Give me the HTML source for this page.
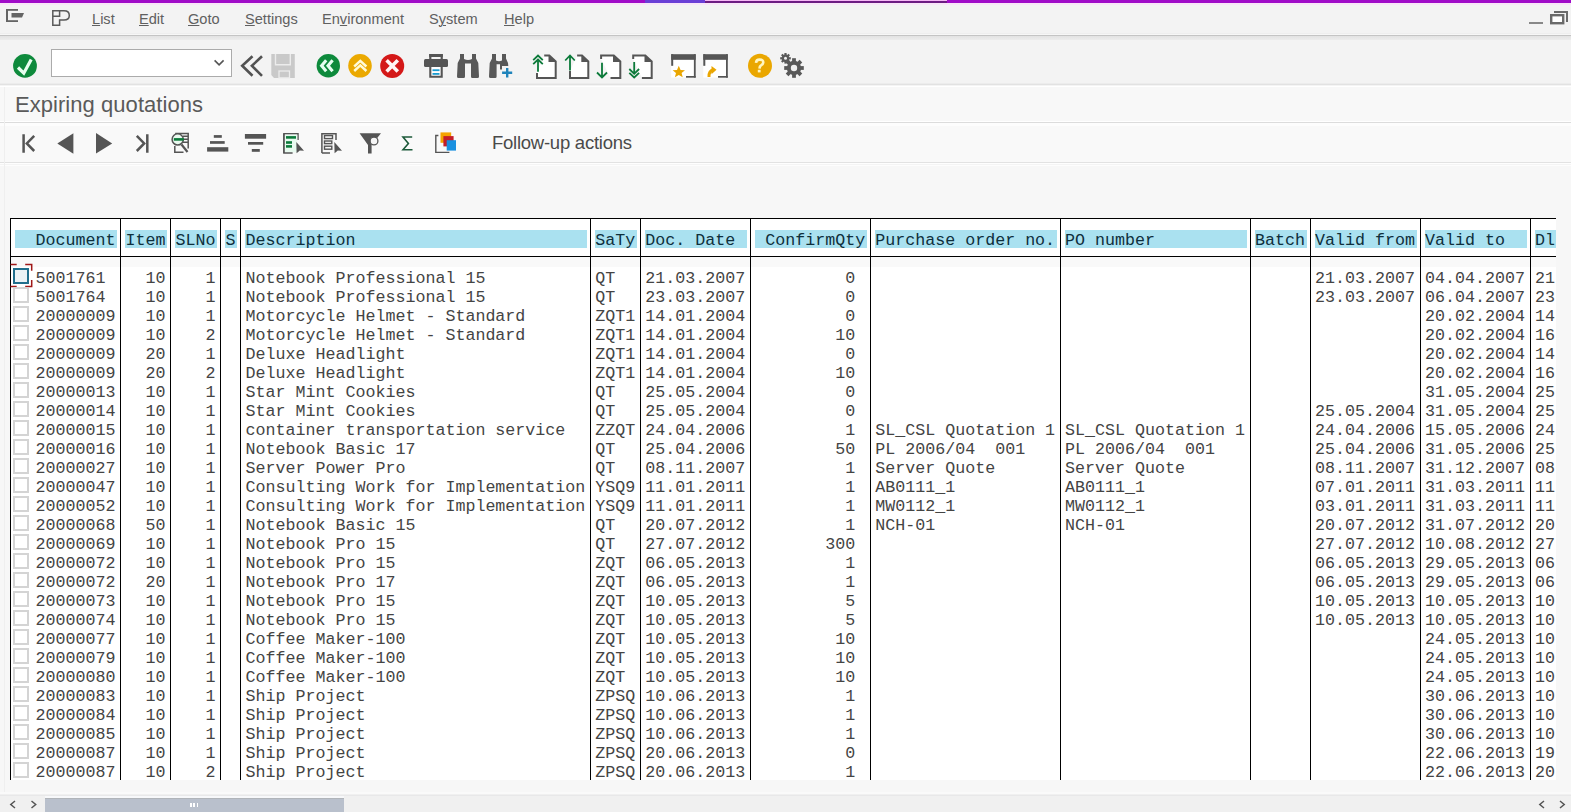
<!DOCTYPE html>
<html><head><meta charset="utf-8"><style>
*{box-sizing:border-box}
html,body{margin:0;padding:0}
body{width:1571px;height:812px;overflow:hidden;position:relative;background:#f7f7f7;font-family:"Liberation Sans",sans-serif}
.a{position:absolute}
.mono{font-family:"Liberation Mono",monospace;font-size:16.6667px;white-space:pre;line-height:19px}
.menu{position:absolute;top:2px;font-size:14.6px;color:#606060;line-height:35px;white-space:pre}
.menu u{text-decoration:underline;text-underline-offset:1px;text-decoration-thickness:1px}
</style></head><body>

<div class="a" style="left:0;top:0;width:1571px;height:3px;background:#a00cc8"></div>
<div class="a" style="left:645px;top:0;width:60px;height:3px;background:#6a3fd6"></div>
<div class="a" style="left:705px;top:0;width:242px;height:1px;background:#f5b8f5"></div>
<div class="a" style="left:705px;top:1px;width:242px;height:2px;background:#6c1c82"></div>
<div class="a" style="left:0;top:3px;width:1571px;height:81px;background:#f3f3f3"></div>
<div class="a" style="left:0;top:3px;width:1571px;height:2px;background:#f8e6f8"></div>
<div class="a" style="left:0;top:33px;width:1571px;height:1px;background:#eeeeee"></div>
<div class="a" style="left:0;top:34px;width:1571px;height:1px;background:#f7f7f7"></div>
<div class="a" style="left:0;top:35px;width:1571px;height:1px;background:#c4c4c4"></div>
<div class="a" style="left:0;top:36px;width:1571px;height:4px;background:linear-gradient(#e2e2e2,#ececec)"></div>
<div class="a" style="left:0;top:83px;width:1571px;height:1px;background:#ececec"></div>
<div class="a" style="left:0;top:84px;width:1571px;height:1px;background:#e2e2e2"></div>
<div class="a" style="left:0;top:85px;width:1571px;height:1px;background:#f4f4f4"></div>
<div class="a" style="left:0;top:86px;width:1571px;height:1px;background:#ffffff"></div>
<div class="a" style="left:0;top:87px;width:1571px;height:35px;background:#f8f8f8"></div>
<div class="a" style="left:0;top:121px;width:1571px;height:1px;background:#ffffff"></div>
<div class="a" style="left:0;top:122px;width:1571px;height:1px;background:#dcdcdc"></div>
<div class="a" style="left:0;top:123px;width:1571px;height:3px;background:#fdfdfd"></div>
<div class="a" style="left:0;top:126px;width:1571px;height:36px;background:#f9f9f9"></div>
<div class="a" style="left:0;top:162px;width:1571px;height:1px;background:#e2e2e2"></div>
<div class="a" style="left:0;top:163px;width:1571px;height:1px;background:#fefefe"></div>
<div class="a" style="left:0;top:164px;width:1571px;height:1px;background:#f4f4f4"></div>
<div class="a" style="left:0;top:165px;width:1571px;height:1px;background:#fdfdfd"></div>
<div class="a" style="left:4px;top:87px;width:1px;height:706px;background:#efefef"></div>
<div class="menu" style="left:92px"><u>L</u>ist</div>
<div class="menu" style="left:139px"><u>E</u>dit</div>
<div class="menu" style="left:188px"><u>G</u>oto</div>
<div class="menu" style="left:245px"><u>S</u>ettings</div>
<div class="menu" style="left:322px">En<u>v</u>ironment</div>
<div class="menu" style="left:429px">S<u>y</u>stem</div>
<div class="menu" style="left:504px"><u>H</u>elp</div>
<div class="a" style="left:15px;top:90px;font-size:22px;color:#5a5a5a;line-height:30px;letter-spacing:0.05px;white-space:pre">Expiring quotations</div>
<div class="a" style="left:492px;top:130px;font-size:18.5px;color:#4a4a4a;line-height:26px;letter-spacing:-0.25px;white-space:pre">Follow-up actions</div>
<div class="a" style="left:51px;top:49px;width:181px;height:28px;background:#fff;border:1px solid #ababab"></div>
<div class="a" style="left:10px;top:218px;width:1546px;height:562px;background:#fff;overflow:hidden">
<div class="a" style="left:5px;top:12px;width:102px;height:18px;background:#aae1f0"></div>
<div class="a" style="left:115px;top:12px;width:42px;height:18px;background:#aae1f0"></div>
<div class="a" style="left:165px;top:12px;width:42px;height:18px;background:#aae1f0"></div>
<div class="a" style="left:215px;top:12px;width:12px;height:18px;background:#aae1f0"></div>
<div class="a" style="left:235px;top:12px;width:342px;height:18px;background:#aae1f0"></div>
<div class="a" style="left:585px;top:12px;width:42px;height:18px;background:#aae1f0"></div>
<div class="a" style="left:635px;top:12px;width:102px;height:18px;background:#aae1f0"></div>
<div class="a" style="left:745px;top:12px;width:112px;height:18px;background:#aae1f0"></div>
<div class="a" style="left:865px;top:12px;width:182px;height:18px;background:#aae1f0"></div>
<div class="a" style="left:1055px;top:12px;width:182px;height:18px;background:#aae1f0"></div>
<div class="a" style="left:1245px;top:12px;width:52px;height:18px;background:#aae1f0"></div>
<div class="a" style="left:1305px;top:12px;width:102px;height:18px;background:#aae1f0"></div>
<div class="a" style="left:1415px;top:12px;width:102px;height:18px;background:#aae1f0"></div>
<div class="a" style="left:1525px;top:12px;width:42px;height:18px;background:#aae1f0"></div>
<div class="a mono" style="left:5.6px;top:13px;color:#0e2f3c">  Document Item SLNo S Description                        SaTy Doc. Date   ConfirmQty Purchase order no. PO number          Batch Valid from Valid to   Dl  </div>
<div class="a" style="left:0;top:0;width:1546px;height:1px;background:#000"></div>
<div class="a" style="left:0;top:38px;width:1546px;height:1px;background:#000"></div>
<div class="a" style="left:0;top:39px;width:1546px;height:10px;background:#f9f9f9"></div>
<div class="a" style="left:0px;top:0;width:1px;height:562px;background:#000"></div>
<div class="a" style="left:110px;top:0;width:1px;height:562px;background:#000"></div>
<div class="a" style="left:160px;top:0;width:1px;height:562px;background:#000"></div>
<div class="a" style="left:210px;top:0;width:1px;height:562px;background:#000"></div>
<div class="a" style="left:230px;top:0;width:1px;height:562px;background:#000"></div>
<div class="a" style="left:580px;top:0;width:1px;height:562px;background:#000"></div>
<div class="a" style="left:630px;top:0;width:1px;height:562px;background:#000"></div>
<div class="a" style="left:740px;top:0;width:1px;height:562px;background:#000"></div>
<div class="a" style="left:860px;top:0;width:1px;height:562px;background:#000"></div>
<div class="a" style="left:1050px;top:0;width:1px;height:562px;background:#000"></div>
<div class="a" style="left:1240px;top:0;width:1px;height:562px;background:#000"></div>
<div class="a" style="left:1300px;top:0;width:1px;height:562px;background:#000"></div>
<div class="a" style="left:1410px;top:0;width:1px;height:562px;background:#000"></div>
<div class="a" style="left:1520px;top:0;width:1px;height:562px;background:#000"></div>
<div class="a mono" style="left:5.6px;top:51px;color:#444">  5001761    10    1   Notebook Professional 15           QT   21.03.2007          0                                              21.03.2007 04.04.2007 21  
  5001764    10    1   Notebook Professional 15           QT   23.03.2007          0                                              23.03.2007 06.04.2007 23  
  20000009   10    1   Motorcycle Helmet - Standard       ZQT1 14.01.2004          0                                                         20.02.2004 14  
  20000009   10    2   Motorcycle Helmet - Standard       ZQT1 14.01.2004         10                                                         20.02.2004 16  
  20000009   20    1   Deluxe Headlight                   ZQT1 14.01.2004          0                                                         20.02.2004 14  
  20000009   20    2   Deluxe Headlight                   ZQT1 14.01.2004         10                                                         20.02.2004 16  
  20000013   10    1   Star Mint Cookies                  QT   25.05.2004          0                                                         31.05.2004 25  
  20000014   10    1   Star Mint Cookies                  QT   25.05.2004          0                                              25.05.2004 31.05.2004 25  
  20000015   10    1   container transportation service   ZZQT 24.04.2006          1  SL_CSL Quotation 1 SL_CSL Quotation 1       24.04.2006 15.05.2006 24  
  20000016   10    1   Notebook Basic 17                  QT   25.04.2006         50  PL 2006/04  001    PL 2006/04  001          25.04.2006 31.05.2006 25  
  20000027   10    1   Server Power Pro                   QT   08.11.2007          1  Server Quote       Server Quote             08.11.2007 31.12.2007 08  
  20000047   10    1   Consulting Work for Implementation YSQ9 11.01.2011          1  AB0111_1           AB0111_1                 07.01.2011 31.03.2011 11  
  20000052   10    1   Consulting Work for Implementation YSQ9 11.01.2011          1  MW0112_1           MW0112_1                 03.01.2011 31.03.2011 11  
  20000068   50    1   Notebook Basic 15                  QT   20.07.2012          1  NCH-01             NCH-01                   20.07.2012 31.07.2012 20  
  20000069   10    1   Notebook Pro 15                    QT   27.07.2012        300                                              27.07.2012 10.08.2012 27  
  20000072   10    1   Notebook Pro 15                    ZQT  06.05.2013          1                                              06.05.2013 29.05.2013 06  
  20000072   20    1   Notebook Pro 17                    ZQT  06.05.2013          1                                              06.05.2013 29.05.2013 06  
  20000073   10    1   Notebook Pro 15                    ZQT  10.05.2013          5                                              10.05.2013 10.05.2013 10  
  20000074   10    1   Notebook Pro 15                    ZQT  10.05.2013          5                                              10.05.2013 10.05.2013 10  
  20000077   10    1   Coffee Maker-100                   ZQT  10.05.2013         10                                                         24.05.2013 10  
  20000079   10    1   Coffee Maker-100                   ZQT  10.05.2013         10                                                         24.05.2013 10  
  20000080   10    1   Coffee Maker-100                   ZQT  10.05.2013         10                                                         24.05.2013 10  
  20000083   10    1   Ship Project                       ZPSQ 10.06.2013          1                                                         30.06.2013 10  
  20000084   10    1   Ship Project                       ZPSQ 10.06.2013          1                                                         30.06.2013 10  
  20000085   10    1   Ship Project                       ZPSQ 10.06.2013          1                                                         30.06.2013 10  
  20000087   10    1   Ship Project                       ZPSQ 20.06.2013          0                                                         22.06.2013 19  
  20000087   10    2   Ship Project                       ZPSQ 20.06.2013          1                                                         22.06.2013 20  </div>
<svg class="a" style="left:0;top:45px" width="24" height="25" viewBox="10 263 24 25"><g fill="none" stroke="#a01818" stroke-width="1.5"><path d="M10.5 264.4 H16.7 M25.2 264.4 H31.7 V270.7 M31.7 280.1 V286.4 H25.2 M16.7 286.4 H10.5"/></g></svg>
<div class="a" style="left:3px;top:50px;width:16px;height:16px;border:2px solid #1f6e8c;background:#eaf2f5"></div>
<div class="a" style="left:3px;top:69px;width:16px;height:16px;border:2px solid #d4d4d4;background:#fff"></div>
<div class="a" style="left:3px;top:88px;width:16px;height:16px;border:2px solid #d4d4d4;background:#fff"></div>
<div class="a" style="left:3px;top:107px;width:16px;height:16px;border:2px solid #d4d4d4;background:#fff"></div>
<div class="a" style="left:3px;top:126px;width:16px;height:16px;border:2px solid #d4d4d4;background:#fff"></div>
<div class="a" style="left:3px;top:145px;width:16px;height:16px;border:2px solid #d4d4d4;background:#fff"></div>
<div class="a" style="left:3px;top:164px;width:16px;height:16px;border:2px solid #d4d4d4;background:#fff"></div>
<div class="a" style="left:3px;top:183px;width:16px;height:16px;border:2px solid #d4d4d4;background:#fff"></div>
<div class="a" style="left:3px;top:202px;width:16px;height:16px;border:2px solid #d4d4d4;background:#fff"></div>
<div class="a" style="left:3px;top:221px;width:16px;height:16px;border:2px solid #d4d4d4;background:#fff"></div>
<div class="a" style="left:3px;top:240px;width:16px;height:16px;border:2px solid #d4d4d4;background:#fff"></div>
<div class="a" style="left:3px;top:259px;width:16px;height:16px;border:2px solid #d4d4d4;background:#fff"></div>
<div class="a" style="left:3px;top:278px;width:16px;height:16px;border:2px solid #d4d4d4;background:#fff"></div>
<div class="a" style="left:3px;top:297px;width:16px;height:16px;border:2px solid #d4d4d4;background:#fff"></div>
<div class="a" style="left:3px;top:316px;width:16px;height:16px;border:2px solid #d4d4d4;background:#fff"></div>
<div class="a" style="left:3px;top:335px;width:16px;height:16px;border:2px solid #d4d4d4;background:#fff"></div>
<div class="a" style="left:3px;top:354px;width:16px;height:16px;border:2px solid #d4d4d4;background:#fff"></div>
<div class="a" style="left:3px;top:373px;width:16px;height:16px;border:2px solid #d4d4d4;background:#fff"></div>
<div class="a" style="left:3px;top:392px;width:16px;height:16px;border:2px solid #d4d4d4;background:#fff"></div>
<div class="a" style="left:3px;top:411px;width:16px;height:16px;border:2px solid #d4d4d4;background:#fff"></div>
<div class="a" style="left:3px;top:430px;width:16px;height:16px;border:2px solid #d4d4d4;background:#fff"></div>
<div class="a" style="left:3px;top:449px;width:16px;height:16px;border:2px solid #d4d4d4;background:#fff"></div>
<div class="a" style="left:3px;top:468px;width:16px;height:16px;border:2px solid #d4d4d4;background:#fff"></div>
<div class="a" style="left:3px;top:487px;width:16px;height:16px;border:2px solid #d4d4d4;background:#fff"></div>
<div class="a" style="left:3px;top:506px;width:16px;height:16px;border:2px solid #d4d4d4;background:#fff"></div>
<div class="a" style="left:3px;top:525px;width:16px;height:16px;border:2px solid #d4d4d4;background:#fff"></div>
<div class="a" style="left:3px;top:544px;width:16px;height:16px;border:2px solid #d4d4d4;background:#fff"></div>
</div>
<svg class="a" style="left:0;top:0" width="1571" height="170" viewBox="0 0 1571 170">
<!-- menu icons -->
<g fill="#646464">
<rect x="6" y="9" width="12" height="1.8"/><rect x="6" y="9" width="2" height="13"/><rect x="6" y="20.2" width="12" height="1.8"/>
<path d="M11.5 13 H24 L22 17.5 H11.5 Z"/>
</g>
<g fill="none" stroke="#5a5a5a" stroke-width="1.5">
<path d="M52.8 10.8 H64 Q69.3 10.8 69.3 15.5 Q69.3 20 64 20 H59.6 V25.3 H52.8 Z"/>
<path d="M52.8 16.3 H59.6 V10.8"/>
</g>
<!-- window controls -->
<rect x="1529" y="22" width="14" height="2" fill="#888"/>
<rect x="1551.2" y="15.2" width="12" height="8" fill="#fff" stroke="#6a6a6a" stroke-width="2.4"/>
<path d="M1554 12 H1567 V22" fill="none" stroke="#6a6a6a" stroke-width="2"/>
<!-- check -->
<circle cx="25" cy="65.9" r="11.9" fill="#0e8a3c"/>
<path d="M18 67.5 L23.8 73.2 L31.2 59.5" fill="none" stroke="#e8fff0" stroke-width="3.2" stroke-linejoin="miter"/>
<!-- dropdown chevron -->
<path d="M214.6 60.4 L219.1 64.9 L223.6 60.4" fill="none" stroke="#555" stroke-width="1.6"/>
<!-- << -->
<path d="M252.5 56.3 L242.2 65.8 L252.5 75.8 M262 56.3 L251.9 65.8 L262 75.8" fill="none" stroke="#525252" stroke-width="2.6"/>
<!-- save disabled -->
<path d="M271.3 54 H294.8 V77.9 H274 L271.3 75 Z" fill="#c9c9c9"/>
<path d="M275.5 54 V64.8 H290.3 V54" fill="none" stroke="#ececec" stroke-width="1.4"/>
<rect x="279" y="71" width="10.5" height="6.9" fill="none" stroke="#ececec" stroke-width="1.3"/>
<!-- green back -->
<circle cx="328.3" cy="65.8" r="11.7" fill="#0d8a3c"/>
<path d="M326.2 60.3 L321.6 65.8 L326.2 71.3 M332.6 60.3 L328 65.8 L332.6 71.3" fill="none" stroke="#e6fff2" stroke-width="3.1"/>
<!-- orange up -->
<circle cx="360" cy="65.8" r="11.8" fill="#eba900"/>
<path d="M354.2 66.5 L360.3 60.8 L366.4 66.5 M354.2 71 L360.3 65.3 L366.4 71" fill="none" stroke="#fffbd8" stroke-width="2.4"/>
<!-- red cancel -->
<circle cx="392.2" cy="65.9" r="12" fill="#d41818"/>
<path d="M386.6 60.3 L397.8 71.5 M397.8 60.3 L386.6 71.5" fill="none" stroke="#fff4f4" stroke-width="3.6"/>
<!-- printer -->
<g fill="#555">
<rect x="429.2" y="54" width="13.6" height="3" rx="0.5"/>
<rect x="429.2" y="54" width="2.2" height="5"/><rect x="440.6" y="54" width="2.2" height="5"/>
<rect x="424" y="59" width="24" height="8" rx="1.5"/>
</g>
<path d="M430.3 67 V76.7 H441.7 V67" fill="#fff" stroke="#555" stroke-width="2.1"/>
<rect x="432.5" y="69.3" width="7" height="1.8" fill="#1a9bd0"/><rect x="432.5" y="73" width="7" height="1.8" fill="#1a9bd0"/>
<!-- binoculars -->
<path d="M460 54 H464 V59 Q468 61.2 472 59 V54 H476 V58.5 L478.3 63 L479 76.5 Q479 78 477.5 78 H472.3 Q471 78 471 76.5 V63.6 H465 V76.5 Q465 78 463.7 78 H458.5 Q457 78 457 76.5 L457.7 63 L460 58.5 Z" fill="#585858"/>
<path d="M492 54 H496 V60.5 Q499 62 502 60.5 V54 H506 V58.5 L508 63 L508.3 66 H503 V69.6 H500 V64.2 H496.6 V76.5 Q496.6 78 495.3 78 H490.5 Q489 78 489 76.5 L489.7 63 L492 58.5 Z" fill="#585858"/>
<path d="M502 66 H512.5 V78.5 H502 Z" fill="#f3f3f3"/>
<path d="M507.2 68.1 V77.6 M502.1 72.8 H512.2" stroke="#1f84bb" stroke-width="2.4" fill="none"/>
<!-- page icons -->
<g stroke="#555" stroke-width="2" fill="#fff">
<path d="M544.2 55.4 H549.3 L555.7 61.5 V77.9 H537 V73"/>
<path d="M577.1 55.4 H582 L588.3 61.5 V77.9 H570 V71"/>
<path d="M610.5 77.9 H620.3 V61.5 L613.8 55.4 H601.1 V59.1"/>
<path d="M641.9 77.9 H651.7 V61.5 L645.3 55.4 H633.2 V59.1"/>
</g>
<g fill="#555">
<path d="M548.5 55 L556 62 H548.5 Z"/><path d="M581.3 55 L588.8 62 H581.3 Z"/>
<path d="M613 55 L620.8 62 H613 Z"/><path d="M644.5 55 L652.2 62 H644.5 Z"/>
</g>
<g stroke="#0c7a3a" stroke-width="1.8" fill="none">
<path d="M538 71.8 V59.5 M533.2 60.2 L538 55.5 L542.8 60.2 M533.2 64.2 L538 59.5 L542.8 64.2"/>
<path d="M570 70.5 V56 M565.2 60.5 L570 55.5 L574.8 60.5"/>
<path d="M602 62.7 V77 M597 72.5 L602 77.5 L607 72.5"/>
<path d="M634.2 62 V73 M629.3 69 L634.2 73.8 L639.1 69 M629.3 72.8 L634.2 77.5 L639.1 72.8"/>
</g>
<!-- windows -->
<rect x="671.2" y="59.8" width="22.7" height="17.8" fill="#fff"/><rect x="703.3" y="59.8" width="22.7" height="17.8" fill="#fff"/>
<g fill="#555">
<rect x="671.2" y="54.2" width="24.5" height="5.6"/><rect x="671.2" y="54.2" width="2" height="11.6"/><rect x="693.9" y="54.2" width="1.8" height="23.4"/><rect x="686" y="76" width="9.7" height="1.7"/>
<rect x="703.3" y="54.2" width="24.5" height="5.6"/><rect x="703.3" y="54.2" width="2" height="11.6"/><rect x="726" y="54.2" width="1.8" height="23.4"/><rect x="718" y="76" width="9.8" height="1.7"/>
</g>
<path d="M678.8 65.8 L680.6 69.9 L685 70.2 L681.6 73 L682.7 77.3 L678.8 74.9 L674.9 77.3 L676 73 L672.6 70.2 L677 69.9 Z" fill="#eaa600"/>
<path d="M709 77 Q708.6 71.2 713 70" fill="none" stroke="#eaa600" stroke-width="3"/><path d="M711.5 66 L716.5 69.8 L711.5 74.2 Z" fill="#eaa600"/>
<!-- help -->
<circle cx="760" cy="65.8" r="12" fill="#eaa700"/>
<path d="M756 62.8 Q756.2 59.6 759.6 59.6 Q763.6 59.6 763.2 62.8 Q762.8 64.6 760.8 65.6 Q759.6 66.4 759.5 68.6" fill="none" stroke="#fff6c0" stroke-width="2.6"/>
<rect x="757.8" y="69.8" width="2.8" height="2.6" fill="#fff6c0"/>
<!-- gears -->
<g fill="#595959">
<g transform="translate(794 68)">
<circle r="7.2"/>
<rect x="-1.9" y="-9.8" width="3.8" height="19.6"/>
<rect x="-1.9" y="-9.8" width="3.8" height="19.6" transform="rotate(45)"/>
<rect x="-1.9" y="-9.8" width="3.8" height="19.6" transform="rotate(90)"/>
<rect x="-1.9" y="-9.8" width="3.8" height="19.6" transform="rotate(135)"/>
</g>
<g transform="translate(785.5 58.3)">
<circle r="3.8"/>
<rect x="-1.1" y="-5.3" width="2.2" height="10.6"/>
<rect x="-1.1" y="-5.3" width="2.2" height="10.6" transform="rotate(45)"/>
<rect x="-1.1" y="-5.3" width="2.2" height="10.6" transform="rotate(90)"/>
<rect x="-1.1" y="-5.3" width="2.2" height="10.6" transform="rotate(135)"/>
</g>
</g>
<circle cx="794" cy="68" r="3.2" fill="#f0f0f0"/>
<circle cx="785.5" cy="58.3" r="1.5" fill="#f0f0f0"/>
<!-- app toolbar -->
<g fill="none" stroke="#555" stroke-width="2.5">
<path d="M23.6 134.2 V152.7 M34.2 135.8 L26.8 143.5 L34.2 151"/>
<path d="M147.3 134.2 V152.7 M136.8 135.8 L144.2 143.5 L136.8 151"/>
</g>
<path d="M57.3 143.5 L73.4 133.2 V153.8 Z" fill="#555"/>
<path d="M112.2 143.4 L96 133.1 V153.6 Z" fill="#555"/>
<!-- magnifier doc -->
<g fill="none" stroke="#555" stroke-width="1.5">
<path d="M175.2 133.5 H188.2 V148.5 M183 136.2 H188.2 M183.5 139.2 H188.2 M183 142.3 H188.2 M174.8 146 V152.3 H183.5"/>
</g>
<circle cx="177.7" cy="139.4" r="5.6" fill="#eafaf0" stroke="#555" stroke-width="1.5"/>
<rect x="173.8" y="138.1" width="10" height="2.6" fill="#0c7a3a"/>
<path d="M181.5 144.5 L187.5 152" stroke="#555" stroke-width="2.2" fill="none"/>
<!-- sort -->
<g fill="#555">
<rect x="213.8" y="135.1" width="8" height="2.7"/><rect x="210" y="141.1" width="14.7" height="2.7"/><rect x="207.1" y="147.2" width="21.2" height="4.4"/>
<rect x="244.9" y="134" width="21.2" height="4.7"/><rect x="248" y="142" width="15.2" height="2.7"/><rect x="251.8" y="149" width="8" height="2.8"/>
</g>
<!-- layout green -->
<path d="M283.9 153 V133.8 H298 V140" fill="none" stroke="#555" stroke-width="1.5"/>
<rect x="284.7" y="134.6" width="12.6" height="17.8" fill="#e8faef"/>
<path d="M283.9 133.8 V153 H292.6" fill="none" stroke="#555" stroke-width="1.5"/>
<g fill="#0c7a3a"><rect x="286" y="136.1" width="10" height="2.6"/><rect x="286" y="141.2" width="6" height="2.6"/><rect x="286" y="145.1" width="6" height="2.6"/></g>
<path d="M296.3 142 L304 150.8 L299.8 150.6 L296.6 153.2 Z" fill="#555"/>
<!-- layout gray -->
<path d="M321.9 153 V133.8 H336 V140 M321.9 153 H330" fill="none" stroke="#555" stroke-width="1.5"/>
<g fill="none" stroke="#555" stroke-width="1.4"><rect x="324.5" y="135.6" width="8" height="3"/><rect x="324.5" y="141" width="7.3" height="2.6"/><rect x="324.5" y="146.2" width="7.3" height="3"/></g>
<path d="M334.3 142 L342 150.8 L337.8 150.6 L334.6 153.2 Z" fill="#555"/>
<!-- funnel -->
<path d="M359.6 133.3 H381 L371.6 145 V153.6 H368 V145 Z" fill="#555"/>
<circle cx="374" cy="141" r="3.9" fill="#f7f7f7" stroke="#555" stroke-width="1.3"/>
<!-- sigma -->
<path d="M412.2 137 H403 L408.4 143.4 L403 149.8 H412.5" fill="none" stroke="#1d5a3a" stroke-width="1.6"/>
<!-- colored squares -->
<path d="M438.4 135.5 H435.8 V152.4 H449.4" fill="none" stroke="#555" stroke-width="1.4"/>
<rect x="440.5" y="132.4" width="10.7" height="10.4" fill="#f5a300"/>
<rect x="443.4" y="136.1" width="10.2" height="10.3" fill="#c41e2a"/>
<rect x="446.7" y="140.2" width="9.3" height="10.4" fill="#1a90e0"/>
</svg>

<div class="a" style="left:0;top:792px;width:1571px;height:2px;background:#fafafa"></div>
<div class="a" style="left:0;top:794px;width:1571px;height:18px;background:#f0f0f0"></div>
<div class="a" style="left:0;top:795px;width:1571px;height:1px;background:#e8e8e9"></div>
<div class="a" style="left:45px;top:796px;width:299px;height:2px;background:#f7f8fa"></div>
<div class="a" style="left:45px;top:798px;width:299px;height:14px;background:#b9c0cc;border-top:1px solid #b0b4b9"></div>
<div class="a" style="left:190px;top:803px;width:1.6px;height:4px;background:#fff"></div>
<div class="a" style="left:193.3px;top:803px;width:1.6px;height:4px;background:#fff"></div>
<div class="a" style="left:196.6px;top:803px;width:1.6px;height:4px;background:#fff"></div>
<svg class="a" style="left:0;top:790px" width="1571" height="22" viewBox="0 790 1571 22"><g fill="none" stroke="#555" stroke-width="1.5"><path d="M15 801 L10.8 804.5 L15 808 M31.5 801 L35.7 804.5 L31.5 808 M1544 801 L1539.8 804.5 L1544 808 M1560 801 L1564.2 804.5 L1560 808"/></g></svg>
</body></html>
